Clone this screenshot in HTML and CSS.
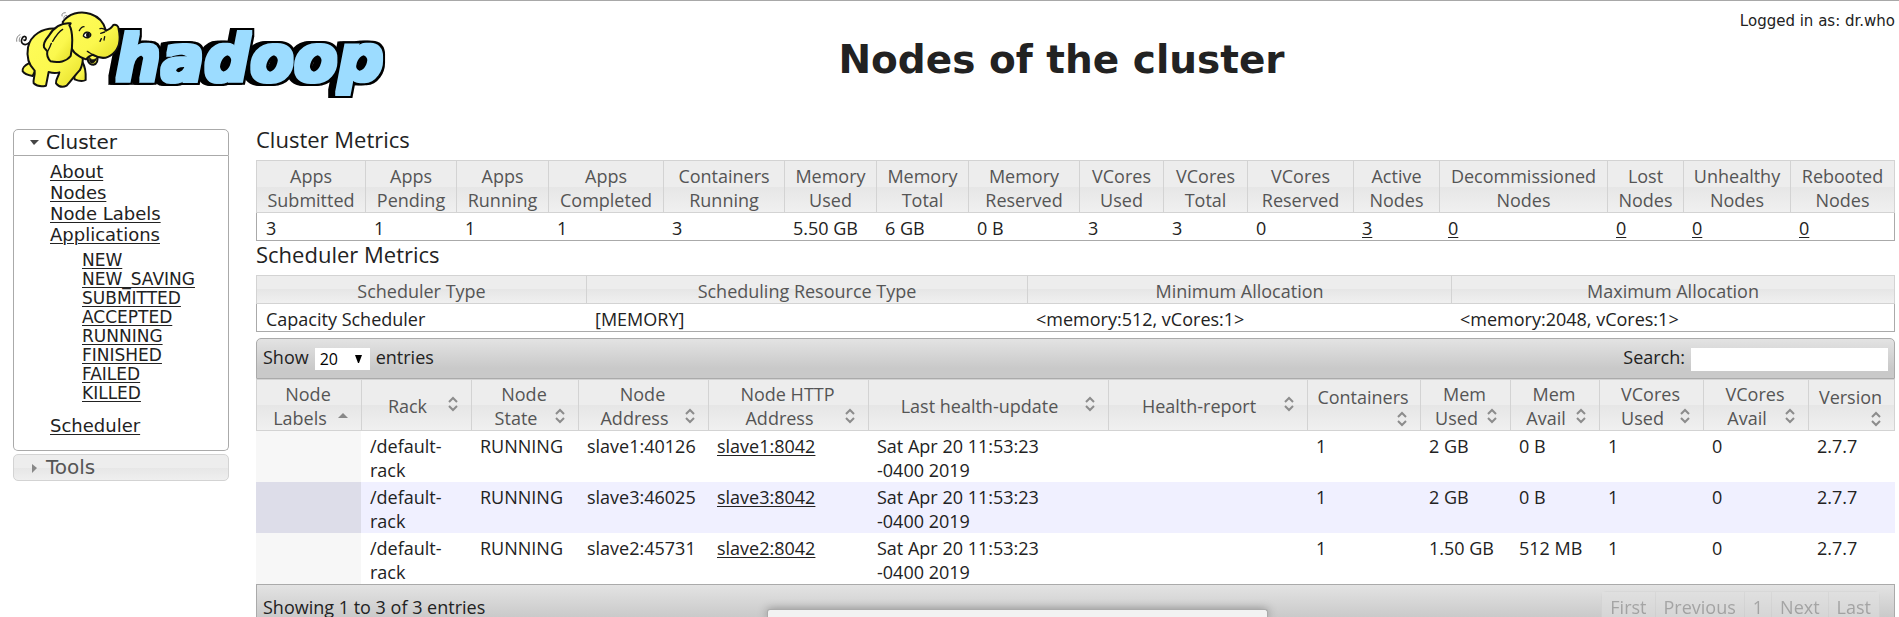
FILE: index.html
```html
<!DOCTYPE html>
<html lang="en">
<head>
<meta charset="utf-8">
<title>Nodes of the cluster</title>
<link rel="stylesheet" href="styles.css">
</head>
<body>
<header class="header">
  <svg class="logo" viewBox="0 0 1200 330" role="img" aria-label="Hadoop">
    <defs>
      <linearGradient id="skin" x1="0" y1="0" x2="1" y2="1">
        <stop offset="0" stop-color="#fffc5a"/><stop offset=".6" stop-color="#fbf84e"/><stop offset="1" stop-color="#e3dc25"/>
      </linearGradient>
      <filter id="extrude" filterUnits="userSpaceOnUse" x="280" y="50" width="920" height="280" color-interpolation-filters="sRGB">
        <feMorphology in="SourceAlpha" operator="dilate" radius="12" result="edge"/>
        <feOffset in="edge" dx="-8" result="shade1"/>
        <feOffset in="edge" dx="-16" result="shade2"/>
        <feMorphology in="SourceGraphic" operator="dilate" radius="5" result="face"/>
        <feMerge><feMergeNode in="shade2"/><feMergeNode in="shade1"/><feMergeNode in="edge"/><feMergeNode in="face"/></feMerge>
      </filter>
    </defs>
    <text class="wordmark" x="346" y="243" filter="url(#extrude)">hadoop</text>
    <g fill="url(#skin)" stroke="#111" stroke-width="6" stroke-linejoin="round" stroke-linecap="round">
      <path d="M88 128C74 140 60 130 66 116C70 106 80 108 78 117C76 124 72 120 72 120" fill="none" stroke-width="5"/>
      <path d="M86 190C74 196 66 206 68 214C74 224 86 226 98 228L112 200Z"/>
      <path d="M246 184C256 200 258 222 257 240C250 244 236 243 224 238L218 200Z"/>
      <path d="M166 86C128 84 92 104 84 142C78 176 88 196 104 212C106 228 98 240 101 250C110 258 126 260 138 257L146 216C156 219 168 220 178 217C176 230 166 238 168 250C176 260 188 263 200 257C216 240 226 224 240 210C246 198 250 188 248 170L210 90Z"/>
      <path d="M266 162C258 180 266 194 280 194C292 192 294 180 292 168Z"/>
      <path d="M188 66C204 42 240 30 272 42C296 50 312 68 318 92C328 88 336 82 340 75C348 72 356 78 356 88C362 116 358 146 338 162C322 176 302 178 278 164C268 168 262 172 258 178C232 170 212 152 206 124Z"/>
      <path d="M212 70C184 66 160 84 146 108C134 122 130 134 132 142L142 154C140 164 144 176 152 184C176 190 200 184 212 168C218 142 220 96 208 76Z"/>
      <path d="M188 88C174 96 166 110 158 124M144 152C150 142 152 136 154 130" fill="none" stroke-width="4"/>
      <path d="M238 92C242 84 248 80 252 80M300 86C306 84 312 86 318 92M302 100L314 96M304 116L300 124M314 110L312 120M262 154C268 160 276 160 280 166" fill="none" stroke-width="4"/>
      <path d="M250 108C252 96 266 92 272 102C274 112 260 118 250 108Z" fill="#fff" stroke-width="4"/>
      <ellipse cx="264" cy="105" rx="6" ry="8" fill="#111" stroke="none"/>
      <path d="M268 170C272 180 280 182 290 174C286 190 272 194 268 182Z" fill="#111" stroke-width="2"/>
      <path d="M186 48C184 42 188 38 196 38M192 56C190 50 194 46 200 46M50 124C48 114 54 106 60 104M58 124C57 118 58 114 61 111" fill="none" stroke="#888" stroke-width="3"/>
    </g>
  </svg>
  <div class="user">Logged in as: dr.who</div>
  <h1 class="title">Nodes of the cluster</h1>
</header>

<div class="page">
  <nav class="nav">
    <h3 class="nav-head nav-head-open"><button type="button"><svg class="caret" viewBox="0 0 16 16"><path d="M4 5H13L8 10Z"/></svg>Cluster</button></h3>
    <div class="nav-body">
      <ul class="nav-list">
        <li><a href="#">About</a></li>
        <li><a href="#">Nodes</a></li>
        <li><a href="#">Node Labels</a></li>
        <li><a href="#">Applications</a>
          <ul class="nav-sub">
            <li><a href="#">NEW</a></li>
            <li><a href="#">NEW_SAVING</a></li>
            <li><a href="#">SUBMITTED</a></li>
            <li><a href="#">ACCEPTED</a></li>
            <li><a href="#">RUNNING</a></li>
            <li><a href="#">FINISHED</a></li>
            <li><a href="#">FAILED</a></li>
            <li><a href="#">KILLED</a></li>
          </ul>
        </li>
        <li><a href="#">Scheduler</a></li>
      </ul>
    </div>
    <h3 class="nav-head nav-head-closed"><button type="button"><svg class="caret" viewBox="0 0 16 16"><path d="M6 4V13L11 8Z"/></svg>Tools</button></h3>
  </nav>

  <main class="content">
    <h2 class="section-title">Cluster Metrics</h2>
    <table class="grid cluster">
      <colgroup><col><col><col><col><col><col><col><col><col><col><col><col><col><col><col><col></colgroup>
      <thead><tr>
        <th>Apps<br>Submitted</th><th>Apps<br>Pending</th><th>Apps<br>Running</th><th>Apps<br>Completed</th><th>Containers<br>Running</th><th>Memory<br>Used</th><th>Memory<br>Total</th><th>Memory<br>Reserved</th><th>VCores<br>Used</th><th>VCores<br>Total</th><th>VCores<br>Reserved</th><th>Active<br>Nodes</th><th>Decommissioned<br>Nodes</th><th>Lost<br>Nodes</th><th>Unhealthy<br>Nodes</th><th>Rebooted<br>Nodes</th>
      </tr></thead>
      <tbody><tr>
        <td>3</td><td>1</td><td>1</td><td>1</td><td>3</td><td>5.50 GB</td><td>6 GB</td><td>0 B</td><td>3</td><td>3</td><td>0</td><td><a href="#">3</a></td><td><a href="#">0</a></td><td><a href="#">0</a></td><td><a href="#">0</a></td><td><a href="#">0</a></td>
      </tr></tbody>
    </table>

    <h2 class="section-title">Scheduler Metrics</h2>
    <table class="grid scheduler">
      <colgroup><col><col><col><col></colgroup>
      <thead><tr><th>Scheduler Type</th><th>Scheduling Resource Type</th><th>Minimum Allocation</th><th>Maximum Allocation</th></tr></thead>
      <tbody><tr><td>Capacity Scheduler</td><td>[MEMORY]</td><td>&lt;memory:512, vCores:1&gt;</td><td>&lt;memory:2048, vCores:1&gt;</td></tr></tbody>
    </table>

    <div class="bar bar-top">
      <label class="length">Show <span class="select"><select><option>20</option><option>50</option><option>100</option></select><svg class="select-arrow" viewBox="0 0 7 8"><path d="M0 0H7L4 8H3Z"/></svg></span> entries</label>
      <label class="search">Search: <input type="text"></label>
    </div>
    <svg class="symbols" aria-hidden="true">
      <symbol id="both" viewBox="0 0 16 16"><path d="M4 6L8 2L12 6M4 10L8 14L12 10"/></symbol>
      <symbol id="asc" viewBox="0 0 16 16"><path class="solid" d="M3 10H13L8 5Z"/></symbol>
    </svg>
    <table class="grid nodes">
      <colgroup><col><col><col><col><col><col><col><col><col><col><col><col><col></colgroup>
      <thead><tr>
        <th><button type="button">Node<br><svg class="sort"><use href="#asc"/></svg>Labels</button></th>
        <th><button type="button"><svg class="sort"><use href="#both"/></svg>Rack</button></th>
        <th><button type="button">Node<br><svg class="sort"><use href="#both"/></svg>State</button></th>
        <th><button type="button">Node<br><svg class="sort"><use href="#both"/></svg>Address</button></th>
        <th><button type="button">Node HTTP<br><svg class="sort"><use href="#both"/></svg>Address</button></th>
        <th><button type="button"><svg class="sort"><use href="#both"/></svg>Last health-update</button></th>
        <th><button type="button"><svg class="sort"><use href="#both"/></svg>Health-report</button></th>
        <th><button type="button">Containers<svg class="sort"><use href="#both"/></svg></button></th>
        <th><button type="button">Mem<br><svg class="sort"><use href="#both"/></svg>Used</button></th>
        <th><button type="button">Mem<br><svg class="sort"><use href="#both"/></svg>Avail</button></th>
        <th><button type="button">VCores<br><svg class="sort"><use href="#both"/></svg>Used</button></th>
        <th><button type="button">VCores<br><svg class="sort"><use href="#both"/></svg>Avail</button></th>
        <th><button type="button">Version<svg class="sort"><use href="#both"/></svg></button></th>
      </tr></thead>
      <tbody>
        <tr><td></td><td>/default-<br>rack</td><td>RUNNING</td><td>slave1:40126</td><td><a href="#">slave1:8042</a></td><td>Sat Apr 20 11:53:23<br>-0400 2019</td><td></td><td>1</td><td>2 GB</td><td>0 B</td><td>1</td><td>0</td><td>2.7.7</td></tr>
        <tr><td></td><td>/default-<br>rack</td><td>RUNNING</td><td>slave3:46025</td><td><a href="#">slave3:8042</a></td><td>Sat Apr 20 11:53:23<br>-0400 2019</td><td></td><td>1</td><td>2 GB</td><td>0 B</td><td>1</td><td>0</td><td>2.7.7</td></tr>
        <tr><td></td><td>/default-<br>rack</td><td>RUNNING</td><td>slave2:45731</td><td><a href="#">slave2:8042</a></td><td>Sat Apr 20 11:53:23<br>-0400 2019</td><td></td><td>1</td><td>1.50 GB</td><td>512 MB</td><td>1</td><td>0</td><td>2.7.7</td></tr>
      </tbody>
    </table>
    <div class="bar bar-bottom">
      <div>Showing 1 to 3 of 3 entries</div>
      <div class="pager"><button type="button" disabled>First</button><button type="button" disabled>Previous</button><button type="button" disabled>1</button><button type="button" disabled>Next</button><button type="button" disabled>Last</button></div>
    </div>
  </main>
</div>
<div class="popup"></div>
</body>
</html>
```
FILE: styles.css
```css
* { box-sizing: border-box; }
body {
  margin: 0;
  height: 100vh;
  overflow: hidden;
  border-top: 1px solid #a8a8a8;
  background: #fff;
  color: #222;
  font-family: "Open Sans", "Noto Sans", sans-serif;
  font-size: 18px;
  line-height: 24px;
}
a { color: inherit; text-underline-offset: 2px; text-decoration-thickness: 1px; }
button { margin: 0; padding: 0; border: 0; background: none; color: inherit; font: inherit; }

.header {
  display: grid;
  grid-template-columns: 228px 1fr;
  grid-template-rows: 32px 93px;
  padding-right: 4px;
  font-family: Verdana, "DejaVu Sans", sans-serif;
}
.logo { grid-area: 1 / 1 / 3 / 3; width: 400px; height: 110px; margin-top: -1px; }
.user { grid-area: 1 / 2; padding-top: 8px; text-align: right; font-size: 15px; }
.title { grid-area: 2 / 2; margin: 0; text-align: center; font-size: 39px; line-height: 54px; }
.wordmark { font: italic bold 192px "DejaVu Sans", sans-serif; fill: #9cdcff; }

.page { display: flex; align-items: flex-start; padding: 0 4px 0 13px; }
.nav { flex: 0 0 216px; margin-top: 3px; font: 18px/21px Verdana, "DejaVu Sans", sans-serif; }
.nav-head { margin: 0; font-size: 20px; line-height: 25px; font-weight: normal; border: 1px solid #aaa; }
.nav-head button { display: flex; align-items: center; gap: 4px; width: 100%; padding-left: 12px; }
.nav-head-open { border-radius: 5px 5px 0 0; }
.nav-head-closed {
  margin-top: 3px;
  border-color: #d3d3d3;
  border-radius: 5px;
  color: #555;
  background: linear-gradient(#ededed 50%, #e6e6e6 50%, #efefef);
}
.caret { width: 16px; height: 16px; fill: #454545; }
.nav-head-closed .caret { fill: #888; }
.nav-body { border: 1px solid #aaa; border-top: 0; border-radius: 0 0 5px 5px; padding: 5px 0 14px; }
.nav-list, .nav-sub { margin: 0; padding: 0; list-style: none; }
.nav-list { padding-left: 36px; }
.nav-sub { padding: 6px 0 12px 32px; font-size: 17px; line-height: 19px; }

.content { flex: 1; min-width: 0; margin-left: 27px; }
.section-title { margin: 0; padding-bottom: 8px; font-size: 22px; line-height: 26px; font-weight: normal; }

.grid { width: 100%; table-layout: fixed; border-collapse: separate; border-spacing: 0; }
.grid th {
  padding: 3px 0 0;
  border: 1px solid #d3d3d3;
  border-right-width: 0;
  background: linear-gradient(#ededed 50%, #e6e6e6 50%, #f0f0f0);
  color: #555;
  font-weight: normal;
}
.grid th:last-child { border-right-width: 1px; }
.grid td { padding: 3px 0 0 9px; vertical-align: top; white-space: nowrap; }
.cluster, .scheduler { border-bottom: 1px solid #aaa; }
.cluster td:first-child, .scheduler td:first-child { border-left: 1px solid #aaa; }
.cluster td:last-child, .scheduler td:last-child { border-right: 1px solid #aaa; }

.cluster col:nth-child(1) { width: 109px; }
.cluster col:nth-child(2) { width: 91px; }
.cluster col:nth-child(3) { width: 92px; }
.cluster col:nth-child(4) { width: 115px; }
.cluster col:nth-child(5) { width: 121px; }
.cluster col:nth-child(6) { width: 92px; }
.cluster col:nth-child(7) { width: 92px; }
.cluster col:nth-child(8) { width: 111px; }
.cluster col:nth-child(9) { width: 84px; }
.cluster col:nth-child(10) { width: 84px; }
.cluster col:nth-child(11) { width: 106px; }
.cluster col:nth-child(12) { width: 86px; }
.cluster col:nth-child(13) { width: 168px; }
.cluster col:nth-child(14) { width: 76px; }
.cluster col:nth-child(15) { width: 107px; }
.cluster col:nth-child(16) { width: 105px; }

.scheduler col:nth-child(1) { width: 330px; }
.scheduler col:nth-child(2) { width: 441px; }
.scheduler col:nth-child(3) { width: 424px; }
.scheduler col:nth-child(4) { width: 444px; }

.nodes col:nth-child(1) { width: 105px; }
.nodes col:nth-child(2) { width: 110px; }
.nodes col:nth-child(3) { width: 107px; }
.nodes col:nth-child(4) { width: 130px; }
.nodes col:nth-child(5) { width: 160px; }
.nodes col:nth-child(6) { width: 240px; }
.nodes col:nth-child(7) { width: 199px; }
.nodes col:nth-child(8) { width: 113px; }
.nodes col:nth-child(9) { width: 90px; }
.nodes col:nth-child(10) { width: 89px; }
.nodes col:nth-child(11) { width: 104px; }
.nodes col:nth-child(12) { width: 105px; }
.nodes col:nth-child(13) { width: 87px; }
.nodes th { height: 52px; padding-top: 2px; }
.nodes th button { display: block; width: 100%; padding: 0 10px 0 8px; }
.nodes tbody tr:nth-child(even) { background: #f0f0ff; }
.nodes td:first-child { background: #f7f7f7; }
.nodes tr:nth-child(even) td:first-child { background: #dddde9; }
.symbols { display: none; }
.sort { float: right; width: 16px; height: 16px; margin-top: 2px; fill: none; stroke: #8c8c8c; stroke-width: 2; }
.solid { fill: #888; stroke: none; }

.bar { display: flex; justify-content: space-between; border: 1px solid #aaa; background: linear-gradient(#e3e3e3, #c9c9c9 75%); }
.bar-top { margin-top: 6px; padding: 6px 6px 6px; border-radius: 5px 5px 0 0; height: 41px; }
.bar-bottom { padding: 6px 14px 6px 6px; line-height: 32px; }
.length, .search { display: flex; gap: 6px; }
.length { align-items: flex-start; }
.select { position: relative; margin-top: 3px; }
.select select { display: block; appearance: none; width: 55px; height: 22px; padding: 0 5px; border: 0; border-radius: 0; background: #fff; color: #000; font: 16px/22px "Open Sans", sans-serif; }
.select-arrow { position: absolute; top: 7px; right: 8px; width: 7px; height: 8px; fill: #000; pointer-events: none; }
.search input { width: 197px; height: 23px; margin-top: 3px; padding: 0 4px; border: 0; font: inherit; }
.pager { display: flex; opacity: .5; border: 1px solid #d3d3d3; border-radius: 5px; color: #777; line-height: 28px; }
.pager button { padding: 0 8px; border-left: 1px solid #d3d3d3; background: #e2e2e2; }
.pager button:first-child { border-left: 0; }

.popup {
  position: absolute;
  bottom: 0;
  left: 767px;
  width: 501px;
  height: 8px;
  border: 1px solid #aaa;
  border-bottom: 0;
  border-radius: 3px 3px 0 0;
  background: #f2f2f2;
  box-shadow: 0 0 10px rgba(0, 0, 0, .35);
}
```
